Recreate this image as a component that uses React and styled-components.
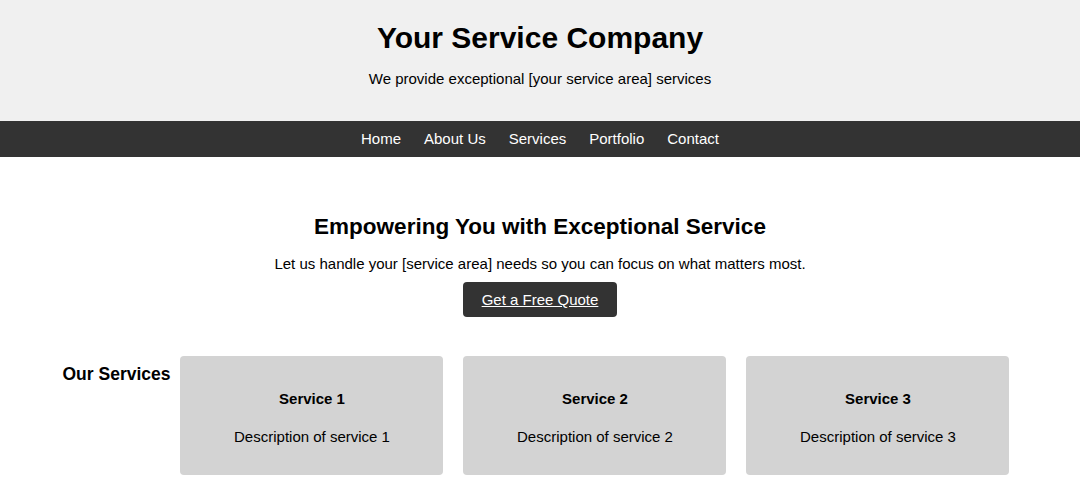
import React from "react";
import styled, { createGlobalStyle } from "styled-components";

const navLinks = ["Home", "About Us", "Services", "Portfolio", "Contact"];

const services = [
  { title: "Service 1", text: "Description of service 1" },
  { title: "Service 2", text: "Description of service 2" },
  { title: "Service 3", text: "Description of service 3" },
];

const App = () => {
  return (
    <>
      <GlobalStyle />
      <Header>
        <Title>Your Service Company</Title>
        <Tagline>We provide exceptional [your service area] services</Tagline>
      </Header>
      <Nav>
        {navLinks.map((link) => (
          <NavLink key={link} href="#">
            {link}
          </NavLink>
        ))}
      </Nav>
      <Hero>
        <HeroTitle>Empowering You with Exceptional Service</HeroTitle>
        <HeroText>
          Let us handle your [service area] needs so you can focus on what
          matters most.
        </HeroText>
        <QuoteButton href="#">Get a Free Quote</QuoteButton>
      </Hero>
      <Services>
        <ServicesTitle>Our Services</ServicesTitle>
        {services.map((s) => (
          <Card key={s.title}>
            <CardTitle>{s.title}</CardTitle>
            <CardText>{s.text}</CardText>
          </Card>
        ))}
      </Services>
    </>
  );
};

const GlobalStyle = createGlobalStyle`
  body {
    margin: 0;
    font-family: "Liberation Sans", Arial, sans-serif;
    color: #000;
    background: #fff;
  }
`;

const Header = styled.header`
  background: #f0f0f0;
  text-align: center;
  padding: 21px 0 34px;
`;

const Title = styled.h1`
  margin: 0 0 15px;
  font-size: 30px;
  line-height: normal;
`;

const Tagline = styled.p`
  margin: 0;
  font-size: 15px;
`;

const Nav = styled.nav`
  background: #333;
  display: flex;
  justify-content: center;
  gap: 23px;
  padding: 9px 0 10px;
`;

const NavLink = styled.a`
  color: #fff;
  text-decoration: none;
  font-size: 15px;
`;

const Hero = styled.section`
  text-align: center;
  padding-top: 57px;
`;

const HeroTitle = styled.h2`
  margin: 0 0 15px;
  font-size: 22.5px;
  line-height: normal;
`;

const HeroText = styled.p`
  margin: 0 0 10px;
  font-size: 15px;
`;

const QuoteButton = styled.a`
  display: inline-block;
  background: #333;
  color: #fff;
  font-size: 15px;
  padding: 9px 19px;
  border-radius: 4px;
`;

const Services = styled.section`
  display: flex;
  justify-content: center;
  align-items: flex-start;
  padding-top: 39px;
  padding-left: 2px;
`;

const ServicesTitle = styled.h3`
  margin: 8px 0 0;
  font-size: 17.5px;
`;

const Card = styled.div`
  width: 263px;
  margin: 0 10px;
  padding: 34px 0 30px;
  background: #d3d3d3;
  border-radius: 4px;
  text-align: center;
`;

const CardTitle = styled.h4`
  margin: 0 0 21px;
  font-size: 15px;
`;

const CardText = styled.p`
  margin: 0;
  font-size: 15px;
`;

export default App;
